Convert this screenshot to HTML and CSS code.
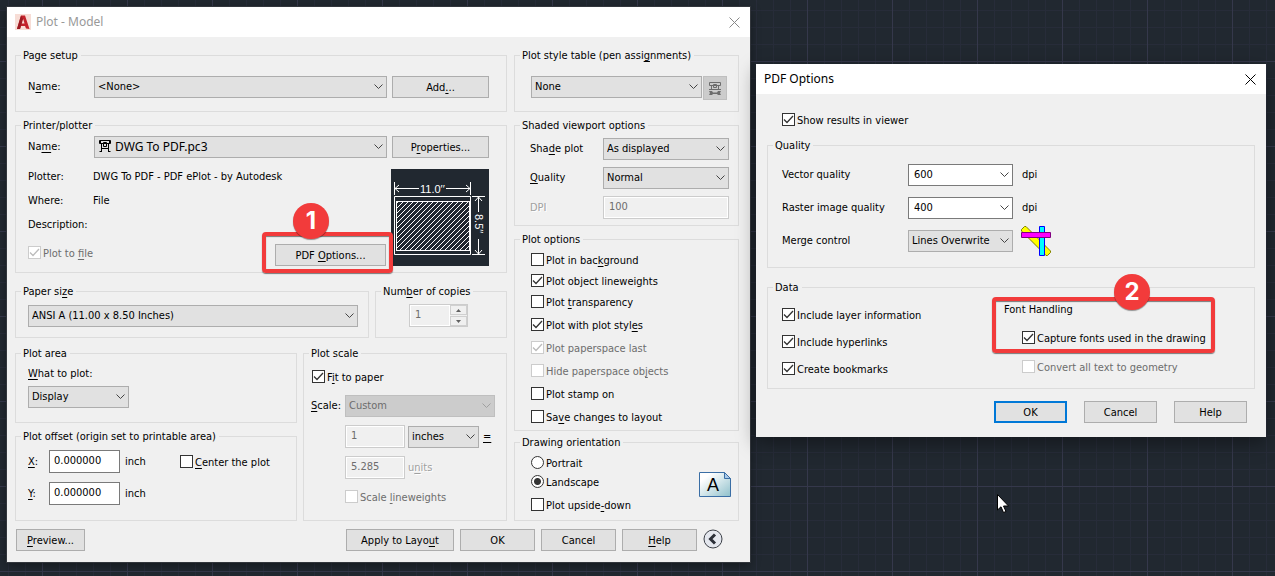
FILE: index.html
```html
<!DOCTYPE html>
<html lang="en">
  <head>
    <meta charset="utf-8" />
    <title>Plot - Model</title>
    <link rel="stylesheet" href="styles.css">
  </head>
  <body>
    <div class="desktop">
      <form class="window plot-window">
        <header class="titlebar inactive">
          <svg class="app-icon" width="16" height="16" viewBox="0 0 16 16">
            <rect width="16" height="16" fill="#f7ddd6" />
            <path d="M2 15 6 1.500h4L14.500 15l-3.500-.500-1-2.500H6L5 15z" fill="#c3222b" />
            <path d="M2 15 6 1.500 8 5 5 15z" fill="#9c1b23" />
            <path d="M6.800 9.500 8.200 5l1.300 4.500z" fill="#f7ddd6" />
          </svg>
          <h1>Plot - Model</h1>
          <button type="button" class="close" aria-label="Close">
            <svg width="11" height="11" viewBox="0 0 11 11"><path d="M.5.5l10 10M10.500.5l-10 10" /></svg>
          </button>
        </header>

        <div class="plot-body">
          <div class="column left">
            <fieldset class="page-setup">
              <legend>Page setup</legend>
              <div class="field-row">
                <label for="setupName">N<u>a</u>me:</label>
                <select id="setupName"><option>&lt;None&gt;</option></select>
                <button type="button">Add<u>.</u>..</button>
              </div>
            </fieldset>

            <fieldset class="printer">
              <legend>Printer/plotter</legend>
              <div class="field-row">
                <label for="printerName">Na<u>m</u>e:</label>
                <div class="icon-select">
                  <svg width="12" height="12" viewBox="0 0 12 12">
                    <path d="M.5.5h11v3H.5zM2.500 3.500v8M9.500 3.500v8M.5 11.500H3M9 11.500h2.500M4.500 2.500h3v4h-3zM2.500 8.500h7M1.500 1v2M10.500 1v2" fill="none" stroke="#000" />
                  </svg>
                  <select id="printerName"><option>DWG To PDF.pc3</option></select>
                </div>
                <button type="button">P<u>r</u>operties...</button>
              </div>
              <div class="printer-info">
                <div class="details">
                  <dl>
                    <dt>Plotter:</dt><dd>DWG To PDF - PDF ePlot - by Autodesk</dd>
                    <dt>Where:</dt><dd>File</dd>
                    <dt>Description:</dt><dd></dd>
                  </dl>
                  <div class="pdf-row">
                    <label class="check"><input type="checkbox" checked disabled /><span>Plot to <u>f</u>ile</span></label>
                    <div class="pdf-button">
                      <button type="button">PDF <u>O</u>ptions...</button>
                      <span class="highlight"></span>
                      <span class="badge">1</span>
                    </div>
                  </div>
                </div>
                <svg class="preview" width="98" height="97" viewBox="0 0 98 97">
                  <defs>
                    <pattern id="hatch" width="5" height="5" patternUnits="userSpaceOnUse">
                      <path d="M-1 6 6-1M-1 1 1-1M4 6 6 4" stroke="#fff" stroke-width="1" />
                    </pattern>
                  </defs>
                  <rect width="98" height="97" fill="#212830" />
                  <rect x="5.500" y="32.500" width="73" height="49" fill="url(#hatch)" stroke="#fff" />
                  <g fill="none" stroke="#fff">
                    <path d="M3.500 27.500h76v58h-76z" />
                    <path d="M3.500 13v13M79.500 13v13M4 19.500h24M55 19.500h24M8 16l-4 3.500L8 23M75 16l4 3.500-4 3.500" />
                    <path d="M81 27.500h13M81 85.500h13M87.500 28v15M87.500 70v15M84 32l3.500-4 3.500 4M84 81l3.500 4 3.500-4" />
                  </g>
                  <text x="29" y="24">11.0′′</text>
                  <text x="-1" y="0" transform="translate(84 46) rotate(90)">8.5′′</text>
                </svg>
              </div>
            </fieldset>

            <div class="paper-row">
              <fieldset class="paper">
                <legend>Paper si<u>z</u>e</legend>
                <select id="paperSize" aria-label="Paper size"><option>ANSI A (11.00 x 8.50 Inches)</option></select>
              </fieldset>
              <fieldset class="copies">
                <legend>Num<u>b</u>er of copies</legend>
                <div class="spinner">
                  <input type="text" value="1" aria-label="Number of copies" disabled />
                  <div class="arrows">
                    <button type="button" aria-label="More" disabled><svg width="5" height="3" viewBox="0 0 5 3"><path d="M0 3 2.500 0 5 3z" /></svg></button>
                    <button type="button" aria-label="Fewer" disabled><svg width="5" height="3" viewBox="0 0 5 3"><path d="M0 0 2.500 3 5 0z" /></svg></button>
                  </div>
                </div>
              </fieldset>
            </div>

            <div class="area-row">
              <div class="column area-column">
                <fieldset class="area">
                  <legend>Plot area</legend>
                  <label for="what"><u>W</u>hat to plot:</label>
                  <select id="what"><option>Display</option></select>
                </fieldset>
                <fieldset class="offset">
                  <legend>Plot offset (origin set to printable area)</legend>
                  <div class="offset-row">
                    <label for="offsetX"><u>X</u>:</label>
                    <input type="text" id="offsetX" value="0.000000" />
                    <span>inch</span>
                    <label class="check"><input type="checkbox" /><span><u>C</u>enter the plot</span></label>
                  </div>
                  <div class="offset-row">
                    <label for="offsetY"><u>Y</u>:</label>
                    <input type="text" id="offsetY" value="0.000000" />
                    <span>inch</span>
                  </div>
                </fieldset>
              </div>
              <fieldset class="scale">
                <legend>Plot scale</legend>
                <label class="check"><input type="checkbox" checked /><span>F<u>i</u>t to paper</span></label>
                <div class="scale-grid">
                  <label for="scale"><u>S</u>cale:</label>
                  <select id="scale" disabled><option>Custom</option></select>
                  <div class="unit-row">
                    <input type="text" value="1" aria-label="Plotted length" disabled />
                    <select aria-label="Length unit"><option>inches</option></select>
                    <u class="equals">=</u>
                  </div>
                  <div class="unit-row">
                    <input type="text" id="units" value="5.285" disabled />
                    <label for="units" class="etched">u<u>n</u>its</label>
                  </div>
                </div>
                <label class="check lineweights"><input type="checkbox" disabled /><span>Scale <u>l</u>ineweights</span></label>
              </fieldset>
            </div>
          </div>

          <div class="column right">
            <fieldset class="style-table">
              <legend>Plot style table (pen assi<u>g</u>nments)</legend>
              <div class="style-row">
                <select aria-label="Plot style table"><option>None</option></select>
                <button type="button" class="edit" aria-label="Edit plot style" disabled>
                  <svg width="12" height="14" viewBox="0 0 12 14">
                    <path d="M.5.5h11v3H.5zM2.500 3v5M9.500 3v5M0 7.500h12M4.500 2.500h3v3h-3z" fill="none" stroke="#6d6d6d" />
                    <path d="M0 9h3l1 1.500h4L9 9h3l-1 2 1 2H9l-1-1H4l-1 1H0l1-2z" fill="#6d6d6d" />
                  </svg>
                </button>
              </div>
            </fieldset>

            <fieldset class="shaded">
              <legend>Shaded viewport options</legend>
              <div class="shaded-grid">
                <label for="shade">Sha<u>d</u>e plot</label>
                <select id="shade"><option>As displayed</option></select>
                <label for="shadeQuality"><u>Q</u>uality</label>
                <select id="shadeQuality"><option>Normal</option></select>
                <label for="dpi" class="etched">DPI</label>
                <input type="text" id="dpi" value="100" disabled />
              </div>
            </fieldset>

            <fieldset class="options">
              <legend>Plot options</legend>
              <div class="check-list">
                <label class="check"><input type="checkbox" /><span>Plot in bac<u>k</u>ground</span></label>
                <label class="check"><input type="checkbox" checked />Plot object lineweights</label>
                <label class="check"><input type="checkbox" /><span>Plot <u>t</u>ransparency</span></label>
              </div>
              <div class="check-list loose">
                <label class="check"><input type="checkbox" checked /><span>Plot with plot styl<u>e</u>s</span></label>
                <label class="check"><input type="checkbox" checked disabled />Plot paperspace last</label>
                <label class="check"><input type="checkbox" disabled /><span>Hide paperspace ob<u>j</u>ects</span></label>
                <label class="check"><input type="checkbox" />Plot stamp on</label>
                <label class="check"><input type="checkbox" /><span>Sa<u>v</u>e changes to layout</span></label>
              </div>
            </fieldset>

            <fieldset class="orientation">
              <legend>Drawing orientation</legend>
              <div>
                <label class="check"><input type="radio" name="orientation" />Portrait</label>
                <label class="check"><input type="radio" name="orientation" checked />Landscape</label>
                <label class="check upside"><input type="checkbox" /><span>Plot upside<u>-</u>down</span></label>
              </div>
              <svg class="page-icon" width="32" height="25" viewBox="0 0 32 25">
                <defs>
                  <linearGradient id="sheet" x1="0" y1="0" x2="1" y2="1">
                    <stop offset=".2" stop-color="#fff" />
                    <stop offset="1" stop-color="#8fc0cb" />
                  </linearGradient>
                </defs>
                <path d="M.5.5h25l6 6v18H.5z" fill="url(#sheet)" stroke="#3a6ea5" />
                <path d="M25.500.5v6h6z" fill="#a9c9e8" stroke="#3a6ea5" />
                <text x="8" y="19">A</text>
              </svg>
            </fieldset>
          </div>
        </div>

        <footer class="plot-footer">
          <button type="button" class="preview-button"><u>P</u>review...</button>
          <button type="button" class="apply">Apply to Layo<u>u</u>t</button>
          <button type="button">OK</button>
          <button type="button">Cancel</button>
          <button type="button"><u>H</u>elp</button>
          <button type="button" class="less" aria-label="Less options">
            <svg width="20" height="20" viewBox="0 0 20 20">
              <circle cx="10" cy="10" r="9" fill="#e4e7ee" stroke="#3c4048" />
              <path d="M12 5.500 7.500 10l4.500 4.500" fill="none" stroke="#2b2f38" stroke-width="3" />
            </svg>
          </button>
        </footer>
      </form>

      <form class="window pdf-window">
        <header class="titlebar">
          <h1>PDF Options</h1>
          <button type="button" class="close" aria-label="Close">
            <svg width="11" height="11" viewBox="0 0 11 11"><path d="M.5.5l10 10M10.500.5l-10 10" /></svg>
          </button>
        </header>
        <div class="pdf-body">
          <label class="check show-results"><input type="checkbox" checked />Show results in viewer</label>

          <fieldset class="quality">
            <legend>Quality</legend>
            <div class="quality-grid">
              <label for="vector">Vector quality</label>
              <select id="vector" class="combo"><option>600</option></select>
              <span>dpi</span>
              <label for="raster">Raster image quality</label>
              <select id="raster" class="combo"><option>400</option></select>
              <span>dpi</span>
              <label for="merge">Merge control</label>
              <select id="merge"><option>Lines Overwrite</option></select>
              <svg class="merge-icon" width="30" height="30" viewBox="0 0 30 30">
                <path d="M.5 5v-1.500l3-3H5L29.500 25v1.500l-3 3H25z" fill="#ff0" stroke="#808000" />
                <path d="M18.500.5h5v29h-5z" fill="#0ff" stroke="#00f" />
                <path d="M.5 6.500h29v5H.5z" fill="#f0f" stroke="#800080" />
              </svg>
            </div>
          </fieldset>

          <fieldset class="data">
            <legend>Data</legend>
            <div class="data-list">
              <label class="check"><input type="checkbox" checked />Include layer information</label>
              <label class="check"><input type="checkbox" checked />Include hyperlinks</label>
              <label class="check"><input type="checkbox" checked />Create bookmarks</label>
            </div>
            <div class="fonts">
              <div class="font-handling">
                <p>Font Handling</p>
                <label class="check"><input type="checkbox" checked />Capture fonts used in the drawing</label>
                <span class="highlight"></span>
                <span class="badge">2</span>
              </div>
              <label class="check"><input type="checkbox" disabled />Convert all text to geometry</label>
            </div>
          </fieldset>

          <footer class="pdf-footer">
            <button type="button" class="default">OK</button>
            <button type="button">Cancel</button>
            <button type="button">Help</button>
          </footer>
        </div>
      </form>

      <svg class="cursor" width="12" height="19" viewBox="0 0 12 19">
        <path d="M.5.5v15.500l3.500-3.200 2.500 5.700 2.500-1-2.500-5.500h5z" fill="#fff" stroke="#000" />
      </svg>
    </div>
  </body>
</html>
```

FILE: styles.css
```css
* {
  box-sizing: border-box;
}
body {
  margin: 0;
  font: 11px/14px "DejaVu Sans Condensed", "Noto Sans", sans-serif;
  color: #000;
}

/* desktop with the drawing grid */
.desktop {
  position: relative;
  min-height: 100vh;
  padding: 7px 9px 14px 7px;
  display: flex;
  align-items: flex-start;
  gap: 6px;
  overflow: hidden;
  background-color: #212830;
  background-image:
    linear-gradient(90deg, #35384b 1px, transparent 1px),
    linear-gradient(#35384b 1px, transparent 1px),
    linear-gradient(90deg, #272c39 1px, transparent 1px),
    linear-gradient(#272c39 1px, transparent 1px);
  background-size: 85px 85px, 85px 85px, 17px 17px, 17px 17px;
  background-position: 42px 61px, 42px 61px, 8px 10px, 8px 10px;
}

.window {
  background: #f0f0f0;
  outline: 1px solid #32363c;
  box-shadow: 0 3px 10px rgba(0, 0, 0, 0.4);
}
.plot-window {
  flex: 743 1 0;
}
.pdf-window {
  flex: 510 1 0;
  margin-top: 57px;
  outline: none;
  box-shadow: 0 6px 18px rgba(0, 0, 0, 0.4);
}

.titlebar {
  height: 30px;
  padding: 0 10px 0 8px;
  display: flex;
  align-items: center;
  gap: 5px;
  background: #fff;
}
.titlebar h1 {
  margin: 0;
  flex: 1;
  font: 12px/16px "Noto Sans", sans-serif;
}
.inactive h1 {
  color: #999;
}
.close {
  width: 11px;
  height: 11px;
  padding: 0;
  border: 0;
  background: none;
}
.close svg {
  display: block;
}
.close path {
  stroke: #000;
}
.inactive .close path {
  stroke: #888;
}

fieldset {
  min-width: 0;
  margin: 0;
  border: 1px solid #dcdcdc;
}
legend {
  margin-left: -7px;
  padding: 1px 3px 0 2px;
  line-height: 13px;
}
u {
  text-underline-offset: 2px;
}

button {
  height: 22px;
  padding: 1px 0 0;
  border: 1px solid #adadad;
  background: #e1e1e1;
  font: inherit;
  color: #000;
}
button.default {
  border: 2px solid #0078d7;
}

select {
  appearance: none;
  width: 100%;
  height: 22px;
  padding: 0 16px 0 3px;
  border: 1px solid #adadad;
  border-radius: 0;
  background: #e1e1e1 url("data:image/svg+xml,%3Csvg xmlns='http://www.w3.org/2000/svg' width='9' height='6'%3E%3Cpath d='M.5.5l4 4 4-4' fill='none' stroke='%23444'/%3E%3C/svg%3E") no-repeat right 3px center;
  font: inherit;
  color: #000;
}
select:disabled {
  opacity: 1;
  border-color: #bfbfbf;
  background-color: #ccc;
  background-image: url("data:image/svg+xml,%3Csvg xmlns='http://www.w3.org/2000/svg' width='9' height='6'%3E%3Cpath d='M.5.5l4 4 4-4' fill='none' stroke='%23a0a0a0'/%3E%3C/svg%3E");
  color: #6d6d6d;
}
.combo {
  padding-left: 5px;
  border-color: #7a7a7a;
  background-color: #fff;
}

input[type="text"] {
  width: 100%;
  height: 23px;
  padding: 0 4px 3px;
  border: 1px solid #7a7a7a;
  background: #fff;
  font: inherit;
  color: #000;
}
input[type="text"]:disabled {
  padding-left: 5px;
  border-color: #ccc;
  background: #f0f0f0;
  box-shadow: inset 0 0 0 1px #fff;
  color: #6d6d6d;
}

.check {
  display: flex;
  align-items: flex-start;
  gap: 2px;
  height: 14px;
  line-height: 15px;
  white-space: pre;
}
.check input {
  appearance: none;
  flex: none;
  width: 13px;
  height: 13px;
  margin: 0;
  border: 1px solid #333;
  background: #fff no-repeat center;
}
.check input[type="checkbox"]:checked {
  background-image: url("data:image/svg+xml,%3Csvg xmlns='http://www.w3.org/2000/svg' width='11' height='11'%3E%3Cpath d='M1 5.500l3 3 6-6.500' fill='none' stroke='%23333' stroke-width='1.300'/%3E%3C/svg%3E");
}
.check input[type="radio"] {
  border-radius: 50%;
}
.check input[type="radio"]:checked {
  background-image: radial-gradient(circle, #333 3px, transparent 4px);
}
.check input:disabled {
  border-color: #ccc;
}
.check input[type="checkbox"]:checked:disabled {
  background-image: url("data:image/svg+xml,%3Csvg xmlns='http://www.w3.org/2000/svg' width='11' height='11'%3E%3Cpath d='M1 5.500l3 3 6-6.500' fill='none' stroke='%23bbb' stroke-width='1.300'/%3E%3C/svg%3E");
}
.check:has(:disabled) {
  color: #6d6d6d;
}
.etched {
  color: #a0a0a0;
  text-shadow: 1px 1px #fff;
}

/* plot window */
.plot-body {
  padding: 11px 11px 0 8px;
  display: grid;
  grid-template-columns: 492fr 225fr;
  gap: 7px;
}
.column {
  display: flex;
  flex-direction: column;
  gap: 6px;
}
.field-row {
  display: grid;
  grid-template-columns: 61px 1fr 97px;
  align-items: center;
  gap: 5px;
}
.page-setup {
  padding: 14px 17px 13px 12px;
}
.printer {
  padding: 4px 17px 6px 12px;
}
.icon-select {
  position: relative;
}
.icon-select svg {
  position: absolute;
  left: 5px;
  top: 4px;
}
.icon-select select {
  padding: 0 16px 1px 20px;
  font: 12px "Noto Sans", sans-serif;
}
.printer-info {
  display: flex;
  align-items: flex-end;
  gap: 5px;
}
.details {
  flex: 1;
}
dl {
  margin: 7px 0 0;
  display: grid;
  grid-template-columns: 65px 1fr;
  line-height: 24px;
}
dd {
  margin: 0;
}
.pdf-row {
  margin-top: 7px;
  display: flex;
  align-items: center;
  justify-content: space-between;
}
.pdf-row .check {
  margin-bottom: 4px;
}
.pdf-button {
  position: relative;
}
.pdf-button button {
  display: block;
  width: 111px;
}
.preview {
  display: block;
}
.preview text {
  font: 11px "Liberation Sans", sans-serif;
  fill: #fff;
}

.highlight {
  position: absolute;
  inset: -12px -7px -7px -13px;
  border: 4px solid #f23b3b;
  border-radius: 4px;
  box-shadow: 0 1px 1px rgba(0, 0, 0, 0.5), inset 0 1px 1px rgba(0, 0, 0, 0.5);
  pointer-events: none;
}
.badge {
  position: absolute;
  left: 18px;
  top: -41px;
  width: 36px;
  height: 36px;
  border-radius: 50%;
  background: #f23b3b;
  box-shadow: 0 1px 1px rgba(0, 0, 0, 0.4);
  font: bold 24px/36px Inter, sans-serif;
  color: #fff;
  text-align: center;
}

.paper-row {
  margin-top: 5px;
  display: grid;
  grid-template-columns: 354fr 132fr;
  gap: 6px;
}
.paper {
  padding: 7px 10px 10px 12px;
}
.copies {
  padding: 6px 12px 10px 33px;
}
.copies legend {
  margin-left: -28px;
}
.spinner {
  width: 59px;
  height: 23px;
  display: flex;
  border: 1px solid #ccc;
}
.spinner input[type="text"] {
  flex: 1;
  min-width: 0;
  height: 21px;
  border: 0;
}
.arrows {
  width: 17px;
  display: flex;
  flex-direction: column;
  gap: 1px;
}
.arrows button {
  flex: 1;
  height: auto;
  padding: 0;
  display: flex;
  align-items: center;
  justify-content: center;
  border-color: #d0d0d0;
  background: #f0f0f0;
}
.arrows path {
  fill: #606060;
}

.area-row {
  margin-top: 2px;
  display: grid;
  grid-template-columns: 282fr 204fr;
  gap: 6px;
}
.area {
  padding: 7px 12px 14px;
}
.area label {
  display: block;
  margin-bottom: 5px;
}
.area select {
  display: block;
  width: 101px;
}
.offset {
  padding: 7px 12px 15px;
}
.offset-row {
  display: grid;
  grid-template-columns: 19px 71px 56px 1fr;
  align-items: center;
  column-gap: 2px;
}
.offset-row > span {
  padding-left: 3px;
}
.offset-row + .offset-row {
  margin-top: 9px;
}
.scale {
  padding: 10px 11px 16px 8px;
}
.scale legend {
  margin-left: -3px;
}
.scale-grid {
  margin: 11px 0;
  display: grid;
  grid-template-columns: 33px 1fr;
  align-items: center;
  gap: 8px 0;
}
.scale-grid > label {
  margin-left: -1px;
}
.unit-row {
  grid-column: 2;
  display: grid;
  grid-template-columns: 60px 71px 1fr;
  align-items: center;
  column-gap: 3px;
}
.equals {
  padding-left: 1px;
}
.lineweights {
  margin-left: 33px;
}

.style-table {
  padding: 14px 11px 11px 16px;
}
.right legend {
  margin-left: -11px;
}
.style-row {
  display: grid;
  grid-template-columns: 1fr 24px;
  gap: 1px;
}
.edit {
  height: 24px;
  display: flex;
  align-items: center;
  justify-content: center;
  border-color: #bfbfbf;
  background: #ccc;
}
.shaded {
  padding: 6px 9px 6px 15px;
}
.right .shaded legend {
  margin-left: -10px;
}
.shaded-grid {
  display: grid;
  grid-template-columns: 73px 1fr;
  align-items: center;
  row-gap: 7px;
}
.options {
  padding: 7px 9px 6px 16px;
}
.check-list {
  display: flex;
  flex-direction: column;
  gap: 7px;
}
.loose {
  margin-top: 9px;
  gap: 9px;
}
.orientation {
  flex: 1;
  margin-top: -2px;
  padding: 7px 7px 7px 16px;
}
.orientation > div {
  float: left;
}
.orientation .check + .check {
  margin-top: 5px;
}
.orientation .check + .upside {
  margin-top: 9px;
}
.page-icon {
  float: right;
  margin-top: 16px;
}
.page-icon text {
  font: 18px "Liberation Sans", sans-serif;
}

.plot-footer {
  padding: 8px 27px 11px 9px;
  display: flex;
  gap: 6px;
}
.plot-footer button {
  width: 75px;
}
.plot-footer .preview-button {
  width: 69px;
  margin-right: auto;
}
.plot-footer .apply {
  width: 108px;
}
.plot-footer .less {
  width: 20px;
  height: 20px;
  padding: 0;
  border: 0;
  background: none;
}
.less svg {
  display: block;
}

/* pdf window */
.pdf-body {
  padding: 19px 11px 14px;
}
.show-results {
  margin-left: 15px;
}
.quality {
  margin-top: 11px;
  padding: 12px 14px 15px;
}
.quality legend,
.data legend {
  margin-left: -9px;
}
.quality-grid {
  display: grid;
  grid-template-columns: 126px 105px 1fr;
  grid-auto-rows: 22px;
  align-items: center;
  row-gap: 11px;
}
.quality-grid span {
  padding-left: 9px;
}
.merge-icon {
  margin-left: 8px;
}
.data {
  margin-top: 12px;
  padding: 14px 14px 12px;
}
.data-list {
  float: left;
  width: 222px;
  display: flex;
  flex-direction: column;
  gap: 13px;
}
.fonts {
  float: left;
  margin-top: -5px;
}
.font-handling {
  position: relative;
}
.font-handling p {
  margin: 0 0 14px;
}
.fonts .check {
  margin-left: 18px;
}
.fonts > .check {
  margin-top: 15px;
}
.font-handling .highlight {
  inset: -6px -9px -8px -12px;
}
.font-handling .badge {
  left: 110px;
  top: -29px;
}
.pdf-footer {
  margin-top: 12px;
  padding-right: 8px;
  display: flex;
  justify-content: flex-end;
  gap: 17px;
}
.pdf-footer button {
  width: 73px;
}

.cursor {
  position: absolute;
  left: 78%;
  top: 494px;
  margin-left: 2px;
}
```
